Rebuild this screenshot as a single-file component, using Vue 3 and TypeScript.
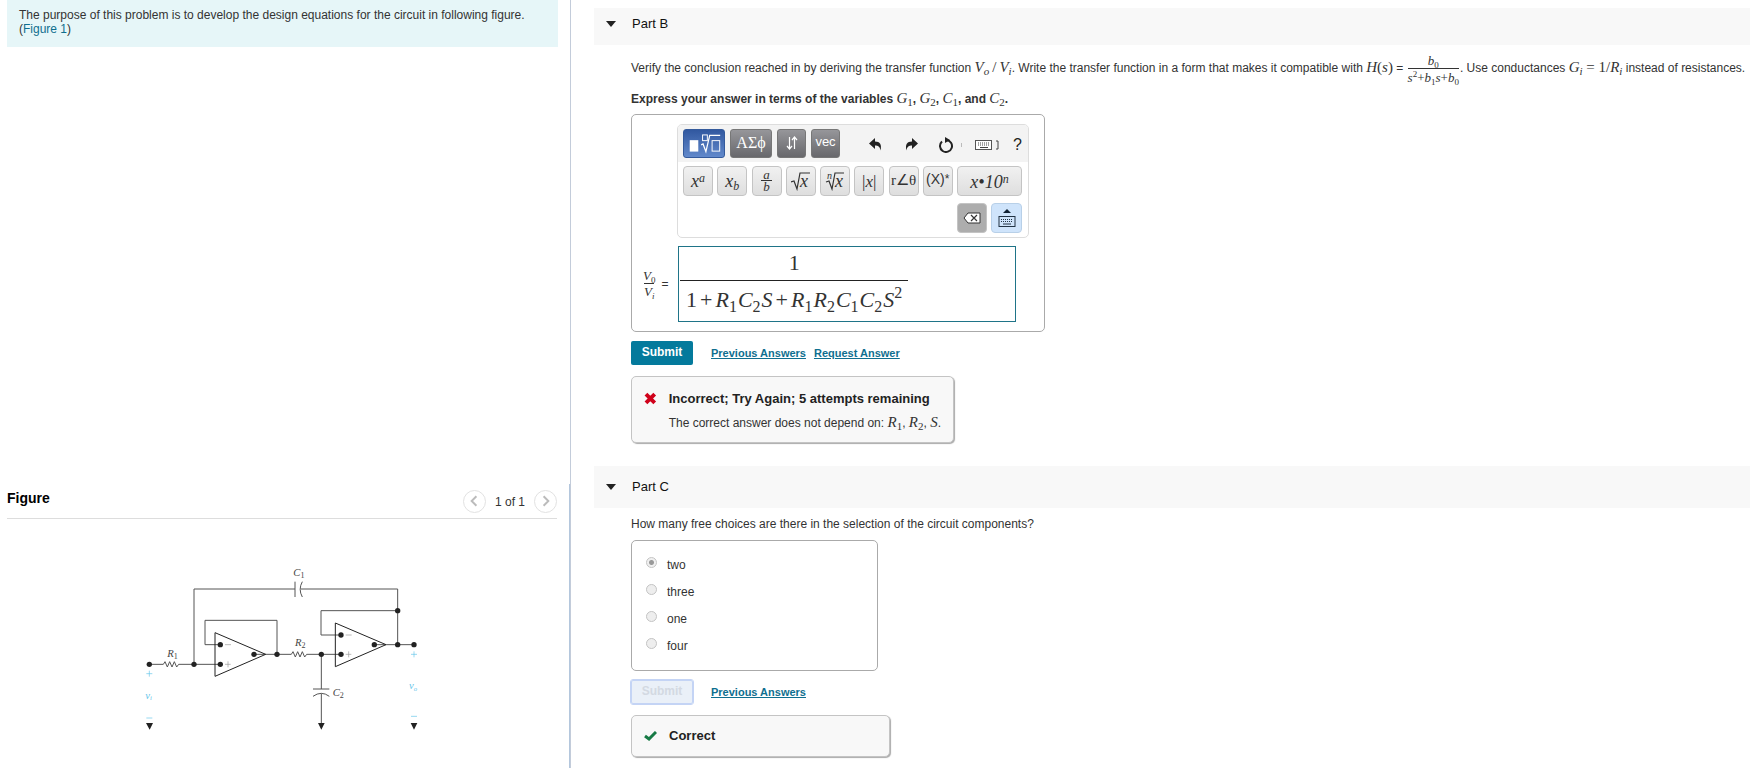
<script setup lang="ts">
import { ref } from 'vue'

const choices: string[] = ['two', 'three', 'one', 'four']
const selected = ref<string>('two')
</script>

<template>
  <div class="page">
    <aside class="left">
      <section class="intro">
        <p>The purpose of this problem is to develop the design equations for the circuit in following figure.<br>(<a href="#figure">Figure 1</a>)</p>
      </section>
      <section id="figure" class="figure">
        <header class="figure-head">
          <h2>Figure</h2>
          <nav class="pager">
            <button type="button" class="round" aria-label="Previous figure">
              <svg viewBox="0 0 22 22" width="22" height="22"><path d="M13 6l-5 5 5 5" fill="none" stroke="#bbb" stroke-width="2" /></svg>
            </button>
            <span>1 of 1</span>
            <button type="button" class="round" aria-label="Next figure">
              <svg viewBox="0 0 22 22" width="22" height="22"><path d="M9 6l5 5-5 5" fill="none" stroke="#bbb" stroke-width="2" /></svg>
            </button>
          </nav>
        </header>
        <svg class="circuit" viewBox="0 0 930 570" width="310" height="190" role="img" aria-label="Circuit diagram">
          <g fill="none" stroke="#555" stroke-width="3">
            <path d="M58 328H100l5-8 7 16 7-16 7 16 7-16 7 16 6-8H271" />
            <path d="M192 328V102H495M512 102H803V269" />
            <path d="M495 80v46M517 80q-13 23 0 46" />
            <path d="M271 269H225V196H441V298" />
            <path d="M372 298H484l5-8 7 16 7-16 7 16 7-16 7 16 6-8H633" />
            <path d="M633 240H573V167H803M733 269H852" />
            <path d="M574 298V402M549 402h49M549 424q25-18 49 0M574 416V508" />
            <path d="M285 269h18M285 328h17M294 319v18M647 240h18M647 298h17M656 289v18" stroke="#999" stroke-width="2" />
          </g>
          <g fill="none" stroke="#222" stroke-width="3">
            <path d="M255 233V364L407 298zM616 204V335L768 269z" />
          </g>
          <g fill="#222">
            <circle cx="58" cy="328" r="8" /><circle cx="192" cy="328" r="8" />
            <circle cx="271" cy="328" r="8" /><circle cx="271" cy="269" r="8" />
            <circle cx="372" cy="298" r="8" /><circle cx="441" cy="298" r="8" />
            <circle cx="574" cy="298" r="8" /><circle cx="633" cy="298" r="8" />
            <circle cx="633" cy="240" r="8" /><circle cx="733" cy="269" r="8" />
            <circle cx="803" cy="269" r="8" /><circle cx="803" cy="167" r="8" />
            <circle cx="852" cy="269" r="8" />
            <path d="M48 504h21l-10 20zM564 504h20l-10 20zM842 504h20l-10 20z" />
          </g>
          <path d="M49 356h18M58 347v18M49 489h18M843 298h18M852 289v18M843 484h18" stroke="#63c5ea" stroke-width="2" fill="none" />
          <g class="ckt-text">
            <text x="112" y="305">R<tspan class="n" dy="7">1</tspan></text>
            <text x="490" y="63">C<tspan class="n" dy="7">1</tspan></text>
            <text x="495" y="273">R<tspan class="n" dy="7">2</tspan></text>
            <text x="608" y="423">C<tspan class="n" dy="7">2</tspan></text>
            <text class="blue" x="46" y="431">v<tspan class="i" dy="5">i</tspan></text>
            <text class="blue" x="837" y="403">v<tspan class="i" dy="5">o</tspan></text>
          </g>
        </svg>
      </section>
    </aside>

    <main class="right">
      <header class="part part-b">
        <svg width="10" height="6" viewBox="0 0 10 6"><path d="M0 0h10L5 6z" fill="#222" /></svg>
        <h2>Part B</h2>
      </header>
      <section class="body">
        <p class="verify">Verify the conclusion reached in by deriving the transfer function <span class="m">V<sub>o</sub>&#8201;<b>/</b>&#8201;V<sub>i</sub></span>. Write the transfer function in a form that makes it compatible with <span class="m">H<b>(</b>s<b>)</b></span> = <span class="frac"><span>b<sub class="n">0</sub></span><span class="den">s<sup class="n">2</sup><b>+</b>b<sub class="n">1</sub>s<b>+</b>b<sub class="n">0</sub></span></span>. Use conductances <span class="m">G<sub>i</sub> <b>=</b> <b>1/</b>R<sub>i</sub></span> instead of resistances.</p>
        <p class="express">Express your answer in terms of the variables <span class="m">G<sub class="n">1</sub></span>, <span class="m">G<sub class="n">2</sub></span>, <span class="m">C<sub class="n">1</sub></span>, and <span class="m">C<sub class="n">2</sub></span>.</p>

        <div class="answer">
          <div class="toolbar">
            <div class="tools">
              <button type="button" class="dark blue-btn" aria-label="Templates">
                <svg width="42" height="29" viewBox="0 0 42 29"><rect x="6" y="11" width="9" height="12" fill="#fff" /><g fill="none" stroke="#fff"><rect x="19.500" y="5.500" width="5" height="6" /><path d="M18 16l2-1 3 8 4-17h11" stroke-width="1.300" /><rect x="29.500" y="11.500" width="8" height="11" /></g></svg>
              </button>
              <button type="button" class="dark greek">ΑΣϕ</button>
              <button type="button" class="dark narrow" aria-label="Arrows">
                <svg width="14" height="16" viewBox="0 0 14 16"><path d="M4.500 2v12M2 11l2.500 3 2.500-3M9.500 14V2M7 5l2.500-3 2.500 3" fill="none" stroke="#fff" stroke-width="1.200" /></svg>
              </button>
              <button type="button" class="dark narrow vec">vec</button>
              <div class="icons">
                <button type="button" class="bare undo" aria-label="Undo"><svg width="14" height="14" viewBox="0 0 14 14"><path d="M6 0v3.500c5 0 7 3 5.500 9C11 8.500 9 7.500 6 7.500V11L0 5.500z" fill="#222" /></svg></button>
                <button type="button" class="bare redo" aria-label="Redo"><svg width="14" height="14" viewBox="0 0 14 14"><path d="M8 0v3.500c-5 0-7 3-5.500 9C3 8.500 5 7.500 8 7.500V11l6-5.500z" fill="#222" /></svg></button>
                <button type="button" class="bare" aria-label="Reset"><svg width="24" height="16" viewBox="0 0 24 16"><path d="M4 4.500A6 6 0 1 0 8.500 3" fill="none" stroke="#222" stroke-width="2" /><path d="M7 0l5 3-5 3z" fill="#222" /><path d="M23.500 6v4" stroke="#bbb" /></svg></button>
                <button type="button" class="bare" aria-label="Keyboard shortcuts"><svg width="25" height="12" viewBox="0 0 25 12"><rect x=".5" y="1.500" width="16" height="9" fill="#fff" stroke="#555" /><path d="M3 4h12M3 6h12" stroke="#444" stroke-width="1" stroke-dasharray="1 1" /><path d="M5 8.500h8" stroke="#444" /><path d="M21 2h2v8h-2" fill="none" stroke="#444" /></svg></button>
                <button type="button" class="bare help">?</button>
              </div>
            </div>
            <div class="keys">
              <button type="button" class="key"><i>x<sup>a</sup></i></button>
              <button type="button" class="key"><i>x<sub>b</sub></i></button>
              <button type="button" class="key"><span class="keyfrac"><i>a</i><i>b</i></span></button>
              <button type="button" class="key root"><svg width="20" height="20" viewBox="0 0 20 20"><path d="M0 11l3-1 3 8L9 2h10" fill="none" stroke="#333" stroke-width="1.200" /><text x="9" y="16">x</text></svg></button>
              <button type="button" class="key root"><svg width="20" height="20" viewBox="0 0 20 20"><path d="M1 11l3-1 3 8L10 2h9" fill="none" stroke="#333" stroke-width="1.200" /><text x="10" y="16">x</text><text class="small" x="2" y="8">n</text></svg></button>
              <button type="button" class="key abs">|<i>x</i>|</button>
              <button type="button" class="key polar">r∠θ</button>
              <button type="button" class="key conj">(X)<sup>*</sup></button>
              <button type="button" class="key wide"><i>x•10<sup>n</sup></i></button>
              <button type="button" class="key back" aria-label="Backspace"><svg width="18" height="12" viewBox="0 0 18 12"><path d="M5 1h12v10H5L1 6z" fill="#fff" stroke="#333" /><path d="M8 3l6 6M14 3L8 9" stroke="#333" stroke-width="1.200" /></svg></button>
              <button type="button" class="key hide" aria-label="Hide keyboard"><svg width="18" height="18" viewBox="0 0 18 18"><path d="M5 4l4-4 4 4z" fill="#123" /><rect x="1" y="7.500" width="16" height="10" fill="none" stroke="#234" /><path d="M3 10.500h12M3 12.500h12" stroke="#234" stroke-dasharray="1 1" /><path d="M5 15h8" stroke="#234" /></svg></button>
            </div>
          </div>
          <div class="entry">
            <span id="ratio" class="ratio"><span class="frac lead"><span>V<sub class="n">0</sub></span><span class="den">V<sub>i</sub></span></span><span>=</span></span>
            <div class="field" role="textbox" contenteditable="true" aria-labelledby="ratio">
              <div class="formula">
                <div class="top">1</div>
                <div class="bottom"><b>1</b><b class="op">+</b>R<sub>1</sub>C<sub>2</sub>S<b class="op">+</b>R<sub>1</sub>R<sub>2</sub>C<sub>1</sub>C<sub>2</sub>S<sup>2</sup></div>
              </div>
            </div>
          </div>
        </div>

        <div class="actions">
          <button type="button" class="submit">Submit</button>
          <a href="#previous-b">Previous Answers</a>
          <a href="#request">Request Answer</a>
        </div>

        <div class="feedback wrong">
          <svg width="13" height="13" viewBox="0 0 13 13"><path d="M2 2l9 9M11 2l-9 9" stroke="#d0021b" stroke-width="4" /></svg>
          <div>
            <h3>Incorrect; Try Again; 5 attempts remaining</h3>
            <p>The correct answer does not depend on: <span class="m">R<sub class="n">1</sub></span>, <span class="m">R<sub class="n">2</sub></span>, <span class="m">S</span>.</p>
          </div>
        </div>
      </section>

      <header class="part part-c">
        <svg width="10" height="6" viewBox="0 0 10 6"><path d="M0 0h10L5 6z" fill="#222" /></svg>
        <h2>Part C</h2>
      </header>
      <section class="body">
        <p class="question">How many free choices are there in the selection of the circuit components?</p>
        <div class="choices" role="radiogroup">
          <label v-for="c in choices" :key="c">
            <input v-model="selected" type="radio" name="free" :value="c" disabled>
            <span>{{ c }}</span>
          </label>
        </div>
        <div class="actions">
          <button type="button" class="submit off" disabled>Submit</button>
          <a href="#previous-c">Previous Answers</a>
        </div>
        <div class="feedback right-answer">
          <svg width="13" height="10" viewBox="0 0 13 10"><path d="M1 5l4 3 7-7" fill="none" stroke="#177a45" stroke-width="3" /></svg>
          <h3>Correct</h3>
        </div>
      </section>
    </main>
  </div>
</template>

<style>
body {
  margin: 0;
  background: #fff;
}
</style>

<style scoped>
* {
  box-sizing: border-box;
}
.page {
  display: grid;
  grid-template-columns: minmax(0, 570fr) minmax(0, 1180fr);
  min-height: 100vh;
  font: 12px/14px "Liberation Sans", Arial, sans-serif;
  color: #333;
}
p, h2, h3 {
  margin: 0;
}
a {
  color: #0f6f8f;
}
button {
  font-family: inherit;
  padding: 0;
  cursor: pointer;
}

/* left pane */
.left {
  display: grid;
  grid-template-rows: 484fr 284fr;
}
.intro {
  align-self: start;
  margin: 0 12px 0 7px;
  padding: 8px 12px 11px;
  background: #e6f6f8;
}
.intro a {
  text-decoration: none;
}
.figure {
  padding: 0 12px 0 7px;
  border-right: 1px solid #b4c7dd;
}
.figure-head {
  display: flex;
  justify-content: space-between;
  align-items: center;
  height: 35px;
  border-bottom: 1px solid #ddd;
}
.figure-head h2 {
  font-size: 14px;
  line-height: 18px;
  color: #000;
  padding-bottom: 6px;
}
.pager {
  display: flex;
  align-items: center;
  gap: 9px;
}
.pager span {
  padding-top: 2px;
}
.round {
  display: flex;
  width: 23px;
  height: 23px;
  border: 1px solid #e2e2e2;
  border-radius: 50%;
  background: #fff;
  align-items: center;
  justify-content: center;
}
.circuit {
  display: block;
  margin: 36px auto 0 123px;
}
.ckt-text {
  font: italic 32px "Liberation Serif", serif;
  fill: #444;
}
.ckt-text .n {
  font-size: 24px;
  font-style: normal;
}
.ckt-text .i {
  font-size: 20px;
}
.ckt-text .blue {
  fill: #63c5ea;
}

/* right pane */
.right {
  padding: 8px 0 10px 23px;
  border-left: 1px solid #c3ccda;
}
.part {
  display: flex;
  align-items: center;
  gap: 16px;
  padding-left: 12px;
  background: #f8f8f8;
}
.part h2 {
  font-size: 13px;
  line-height: 16px;
  font-weight: 400;
  color: #111;
}
.part-b {
  height: 37px;
  padding-bottom: 6px;
}
.part-c {
  height: 42px;
  margin-top: 23px;
}
.body {
  padding-left: 37px;
}
.m, .frac {
  font-family: "Liberation Serif", serif;
  font-style: italic;
  font-weight: 400;
}
.m {
  font-size: 15px;
  line-height: 14px;
}
.m b, .frac b {
  font-weight: 400;
  font-style: normal;
}
sub, sup {
  font-size: 11px;
  line-height: 0;
}
sub {
  vertical-align: -3px;
}
sup {
  vertical-align: 5px;
}
.n {
  font-style: normal;
}
.frac {
  display: inline-flex;
  flex-direction: column;
  align-items: center;
  vertical-align: middle;
  margin: 0 1px;
  font-size: 13px;
  line-height: 15px;
}
.frac sub, .frac sup {
  font-size: 9px;
}
.frac .den {
  border-top: 1px solid #333;
  padding: 1px 0 0;
}
.verify {
  padding-top: 7px;
  line-height: 32px;
}
.express {
  padding-top: 6px;
  font-weight: 700;
}
.answer {
  width: 414px;
  margin-top: 8px;
  padding: 9px 15px 9px 11px;
  border: 1px solid #aaa;
  border-radius: 5px;
}
.toolbar {
  margin-left: 34px;
  width: 352px;
  border: 1px solid #ddd;
  border-radius: 5px;
  overflow: hidden;
}
.tools {
  display: flex;
  gap: 5px;
  padding: 4px 5px;
  height: 37px;
  background: #f3f3f3;
}
.dark {
  display: flex;
  align-items: center;
  justify-content: center;
  width: 42px;
  height: 29px;
  border: 1px solid #777;
  border-radius: 3px;
  background: linear-gradient(#96969a, #68686c);
  color: #fff;
}
.dark.narrow {
  width: 29px;
}
.dark.blue-btn {
  border-color: #345a9c;
  background: linear-gradient(#3158a0, #6289cb);
}
.greek {
  font: 16px "Liberation Serif", serif;
}
.vec {
  font-size: 13px;
  padding-bottom: 4px;
}
.icons {
  display: flex;
  flex: 1;
  align-items: center;
  justify-content: flex-end;
  gap: 13px;
  padding: 4px 1px 0 0;
}
.bare {
  display: flex;
  border: 0;
  background: none;
  color: #222;
}
.undo {
  width: 22px;
}
.redo {
  width: 21px;
}
.help {
  font-size: 16px;
}
.keys {
  display: grid;
  grid-template-columns: repeat(8, 30px) 65px;
  justify-content: space-between;
  gap: 7px 4px;
  padding: 4px 6px 4px 5px;
}
.key {
  display: flex;
  align-items: center;
  justify-content: center;
  height: 30px;
  border: 1px solid #c4c4c4;
  border-radius: 4px;
  background: linear-gradient(#f1f1f1, #dedede);
  color: #333;
  font: 18px/20px "Liberation Serif", serif;
}
.key sup, .key sub {
  font-size: 12px;
}
.key text {
  font: italic 18px "Liberation Serif", serif;
  fill: #333;
}
.key text.small {
  font-size: 10px;
}
.keyfrac {
  display: flex;
  flex-direction: column;
  font-size: 13px;
  line-height: 11px;
}
.keyfrac i + i {
  border-top: 1px solid #333;
  padding: 0 2px;
}
.abs {
  font-size: 17px;
  padding-top: 2px;
}
.polar {
  font-size: 15px;
  padding-bottom: 2px;
}
.conj {
  font: 14px "Liberation Sans", sans-serif;
  padding-bottom: 3px;
}
.wide {
  font-size: 18px;
  padding-top: 2px;
}
.back {
  grid-column: 8;
  grid-row: 2;
  width: 30px;
  margin-left: 34px;
  background: #adadad;
}
.hide {
  grid-column: 9;
  grid-row: 2;
  width: 31px;
  justify-self: end;
  background: #cfe4fb;
  border-color: #b8d0e8;
}
.entry {
  display: flex;
  align-items: center;
  margin-top: 8px;
}
.ratio {
  display: flex;
  align-items: center;
  gap: 6px;
  width: 35px;
}
.lead {
  margin: 0;
  line-height: 14px;
}
.field {
  width: 338px;
  height: 76px;
  padding: 3px 1px;
  border: 1px solid #1f7488;
  outline: 0;
}
.formula {
  display: inline-block;
  font: italic 22px/26px "Liberation Serif", serif;
  white-space: nowrap;
}
.formula .top {
  padding-bottom: 4px;
  text-align: center;
  font-style: normal;
  border-bottom: 1px solid #222;
}
.formula .bottom {
  padding: 6px 6px 0;
}
.formula b {
  font-weight: 400;
  font-style: normal;
}
.formula .op {
  padding: 0 3px;
}
.formula sub, .formula sup {
  font-size: 16px;
  font-style: normal;
}
.formula sub {
  vertical-align: -5px;
  padding-right: 1px;
}
.formula sup {
  vertical-align: 9px;
}
.actions {
  display: flex;
  align-items: center;
  margin-top: 9px;
}
.actions a {
  margin-right: 8px;
  font-size: 11px;
  font-weight: 700;
}
.submit {
  width: 62px;
  height: 24px;
  margin-right: 18px;
  padding-bottom: 2px;
  border: 0;
  border-radius: 2px;
  background: #047a9c;
  color: #fff;
  font-size: 12px;
  font-weight: 700;
}
.submit.off {
  background: #eaf0f8;
  color: #d3d9e2;
  outline: 1px solid #c4d4f5;
  border: 1px solid #c4d4f5;
}
.feedback {
  display: flex;
  gap: 12px;
  border: 1px solid #c4c4c4;
  border-radius: 5px;
  background: #f8f8f8;
  box-shadow: 1px 1px 1px #aaa;
}
.feedback h3 {
  font-size: 13px;
  line-height: 16px;
  color: #222;
}
.wrong {
  width: 323px;
  height: 67px;
  margin-top: 11px;
  padding: 14px 12px;
}
.wrong svg {
  margin-top: 1px;
}
.wrong p {
  padding-top: 8px;
  white-space: nowrap;
}
.question {
  padding-top: 9px;
}
.choices {
  display: flex;
  flex-direction: column;
  gap: 13px;
  width: 247px;
  margin-top: 9px;
  padding: 16px 14px 18px;
  border: 1px solid #aaa;
  border-radius: 5px;
}
.choices label {
  display: flex;
  gap: 10px;
  height: 14px;
}
.choices span {
  padding-top: 1px;
}
.choices input {
  appearance: none;
  width: 11px;
  height: 11px;
  margin: 0;
  border: 1px solid #c4c4c4;
  border-radius: 50%;
  background: #eee;
}
.choices input:checked {
  background: radial-gradient(circle, #999 2px, #f0f0f0 3px);
}
.right-answer {
  width: 259px;
  height: 42px;
  margin-top: 11px;
  padding: 0 12px;
  align-items: center;
}
</style>
